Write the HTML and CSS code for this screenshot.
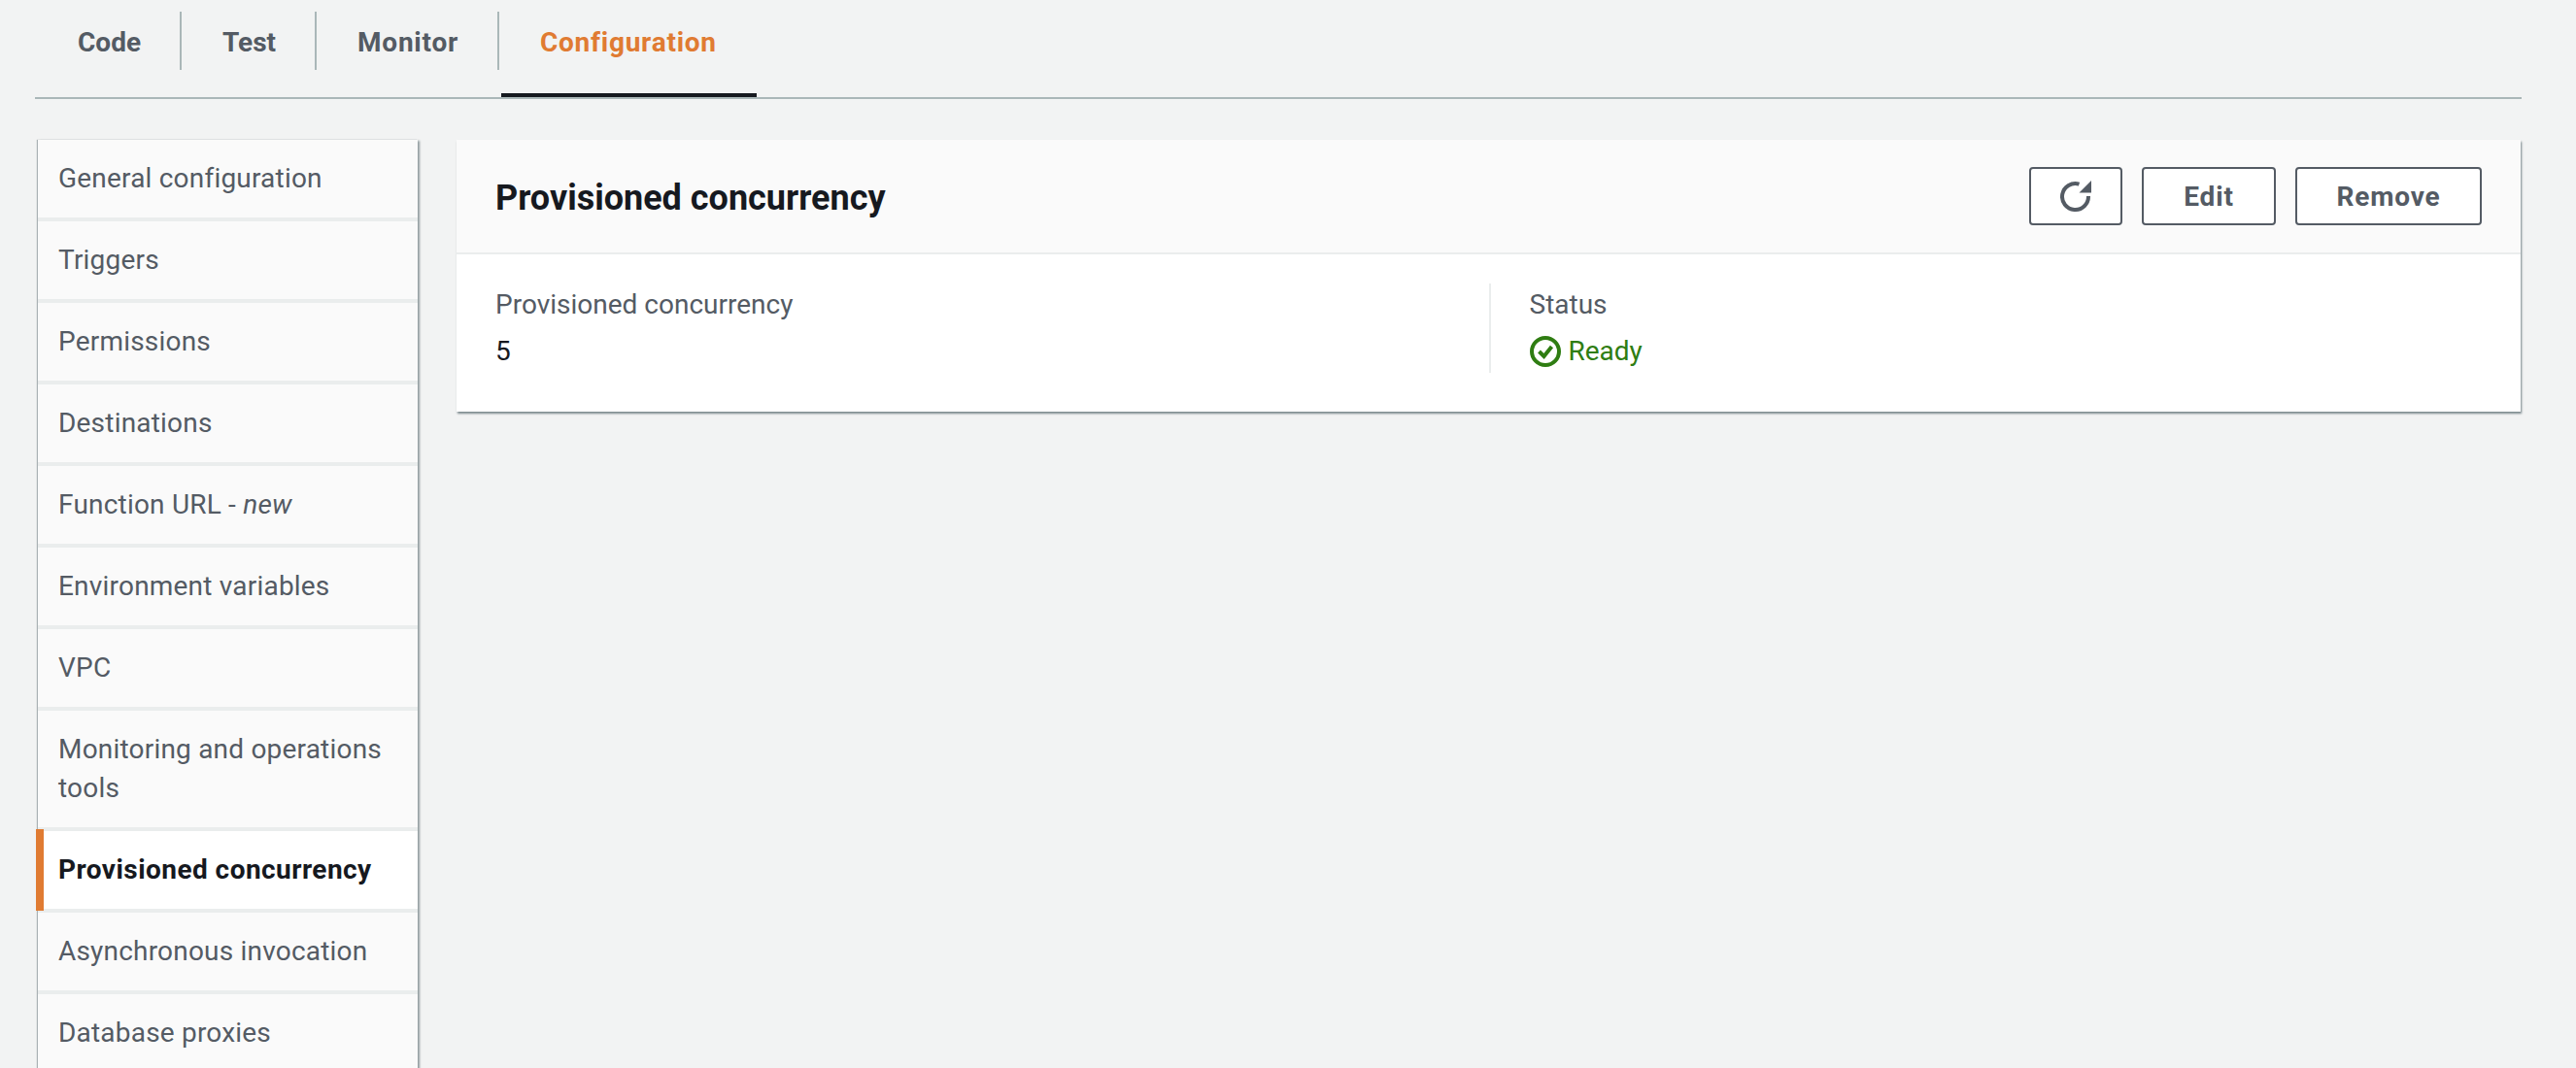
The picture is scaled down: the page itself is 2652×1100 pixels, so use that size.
FILE: index.html
```html
<!DOCTYPE html>
<html lang="en">
<head>
    <meta charset="UTF-8">
    <meta name="viewport" content="width=device-width, initial-scale=1.0">
    <title>Provisioned concurrency</title>
    <link rel="stylesheet" href="styles.css">
</head>
<body>
    <div class="page">
        <div class="tabs">
            <a class="tab">Code</a>
            <a class="tab">Test</a>
            <a class="tab tab-wide">Monitor</a>
            <a class="tab tab-wide tab-active">Configuration</a>
        </div>
        <div class="layout">
            <nav class="side-nav">
                <a class="side-item">General configuration</a>
                <a class="side-item">Triggers</a>
                <a class="side-item">Permissions</a>
                <a class="side-item">Destinations</a>
                <a class="side-item">Function URL - <em>new</em></a>
                <a class="side-item">Environment variables</a>
                <a class="side-item">VPC</a>
                <a class="side-item">Monitoring and operations tools</a>
                <a class="side-item side-item-active">Provisioned concurrency</a>
                <a class="side-item">Asynchronous invocation</a>
                <a class="side-item">Database proxies</a>
            </nav>
            <section class="card">
                <header class="card-header">
                    <h2>Provisioned concurrency</h2>
                    <div class="actions">
                        <button class="btn btn-icon" aria-label="Refresh">
                            <svg width="32" height="32" viewBox="0 0 32 32">
                                <path d="M19.5 3.6A13.5 13.5 0 1 0 29 16" fill="none" stroke="#545b64" stroke-width="4"/>
                                <path d="M32 0V12.5H19.5Z" fill="#545b64"/>
                            </svg>
                        </button>
                        <button class="btn btn-edit">Edit</button>
                        <button class="btn btn-remove">Remove</button>
                    </div>
                </header>
                <div class="card-body">
                    <div class="field">
                        <div class="field-label">Provisioned concurrency</div>
                        <div class="field-value">5</div>
                    </div>
                    <div class="field field-status">
                        <div class="field-label">Status</div>
                        <div class="status-ok">
                            <svg width="32" height="32" viewBox="0 0 32 32">
                                <circle cx="16" cy="16" r="14" fill="none" stroke="#2f7d12" stroke-width="4"/>
                                <path d="M9.5 16l5 5 8-10" fill="none" stroke="#2f7d12" stroke-width="4"/>
                            </svg>
                            <span>Ready</span>
                        </div>
                    </div>
                </div>
            </section>
        </div>
    </div>
</body>
</html>
```
FILE: styles.css
```css
body {
    margin: 0;
    background-color: #f2f3f3;
    color: #545b64;
    font-family: Roboto, "Noto Sans", sans-serif;
    font-size: 28px;
    line-height: 40px;
}
.page {
    height: 1100px;
    overflow: hidden;
    padding: 0 56px 0 36px;
}
.tabs {
    display: flex;
    height: 100px;
    padding-left: 2px;
    border-bottom: 2px solid #aab7b8;
}
.tab {
    position: relative;
    height: 60px;
    margin-top: 12px;
    padding: 2px 40px 0 42px;
    box-sizing: border-box;
    border-right: 2px solid #aab7b8;
    font-weight: 700;
    line-height: 60px;
}
.tab-wide {
    letter-spacing: 0.75px;
}
.tab:last-child {
    border-right: none;
}
.tab-active {
    color: #e07b32;
}
.tab-active::after {
    content: "";
    position: absolute;
    left: 2px;
    right: -1px;
    bottom: -28px;
    height: 4px;
    background: #16191f;
}
.layout {
    display: grid;
    grid-template-columns: 392px 1fr;
    gap: 40px;
    align-items: start;
    margin: 42px 1px 0 2px;
}
.side-nav {
    display: flex;
    flex-direction: column;
    gap: 4px;
    background: #eaeded;
    box-shadow: 2px 1px 2px rgba(0, 28, 36, 0.4), -1px 0 1px rgba(0, 28, 36, 0.3);
    margin-left: 1px;
}
.side-item {
    position: relative;
    padding: 20px 30px 20px 21px;
    background: #fafafa;
    letter-spacing: 0.2px;
}
.side-item-active {
    background: #fff;
    color: #16191f;
    font-weight: 700;
    letter-spacing: 0.45px;
}
.side-item-active::before {
    content: "";
    position: absolute;
    left: -2px;
    top: -2px;
    bottom: -2px;
    width: 8px;
    background: #e07b32;
}
.card {
    background: #fff;
    box-shadow: 1px 2px 2px rgba(0, 28, 36, 0.5);
}
.card-header {
    display: flex;
    justify-content: space-between;
    align-items: center;
    height: 116px;
    padding: 0 40px;
    background: #fafafa;
    border-bottom: 2px solid #eaeded;
}
.card-header h2 {
    margin: 4px 0 0;
    color: #16191f;
    font-size: 36px;
    font-weight: 700;
}
.actions {
    display: flex;
    gap: 20px;
}
.btn {
    display: flex;
    align-items: center;
    justify-content: center;
    height: 60px;
    padding: 0;
    background: #fff;
    border: 2px solid #545b64;
    border-radius: 4px;
    color: #545b64;
    font: 700 28px Roboto, "Noto Sans", sans-serif;
    letter-spacing: 0.8px;
}
.btn-icon {
    width: 96px;
}
.btn-edit {
    width: 138px;
}
.btn-remove {
    width: 192px;
}
.card-body {
    display: grid;
    grid-template-columns: 1fr 1fr;
    padding: 30px 40px 40px;
}
.field {
    padding-bottom: 2px;
}
.field-label {
    margin-top: 2px;
    margin-bottom: 8px;
}
.field-value {
    color: #16191f;
}
.field-status {
    padding-left: 40px;
    border-left: 2px solid #eaeded;
}
.status-ok {
    display: flex;
    align-items: center;
    gap: 8px;
    color: #2f7d12;
}
```
